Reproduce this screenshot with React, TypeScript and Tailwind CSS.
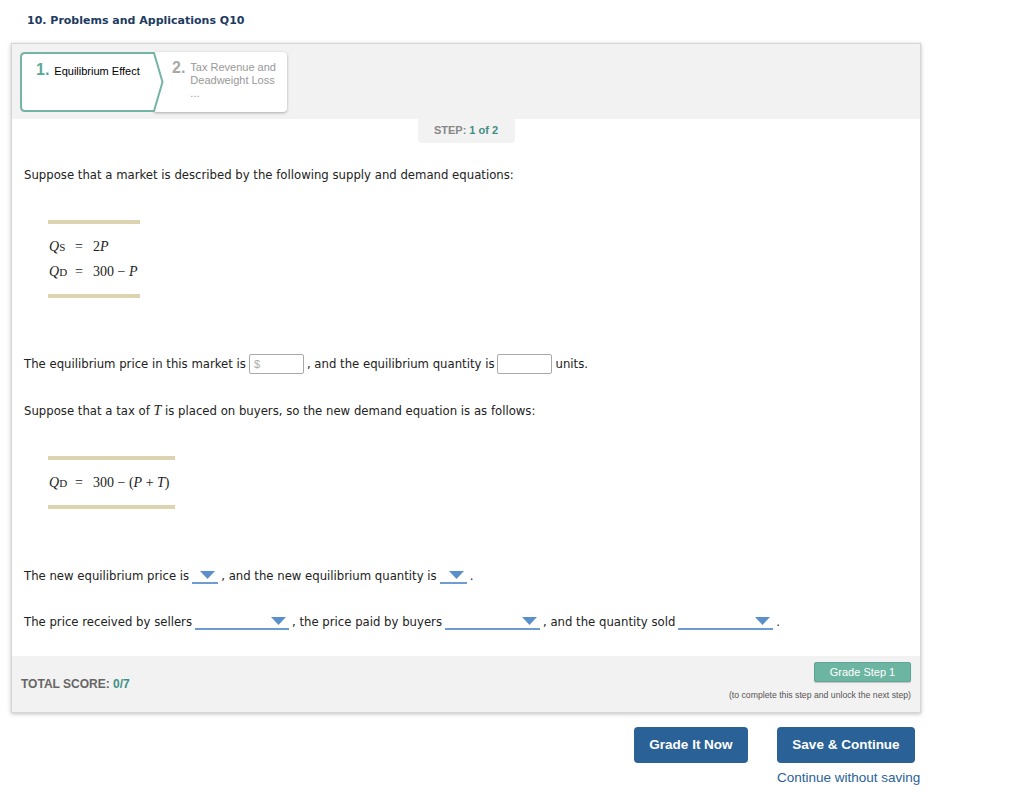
import React from 'react'

const TEAL = '#3f8f85'

function Dropdown({ w }: { w: number }) {
  return (
    <span
      className="inline-flex items-center justify-end border-b-2 border-[#6d9ccf] h-[16px] align-middle mx-[3px] pr-[3px]"
      style={{ width: w }}
    >
      <svg width="15" height="8" viewBox="0 0 15 8">
        <polygon points="0,0 15,0 7.5,8" fill="#5b8fcb" />
      </svg>
    </span>
  )
}

function TextBox({ prefix }: { prefix?: string }) {
  return (
    <span className="inline-flex items-center w-[55px] h-[20px] border border-[#a9a9a9] rounded-[2px] align-middle mx-[3px] px-[4px] bg-white">
      {prefix && <span className="text-[#aaa] text-[11px] font-['Liberation_Sans']">{prefix}</span>}
    </span>
  )
}

function Q({ sub }: { sub: string }) {
  return (
    <span>
      <i>Q</i>
      <span className="text-[11px]">{sub}</span>
    </span>
  )
}

function EqBox({ width, children }: { width: number; children: React.ReactNode }) {
  return (
    <div className="ml-[24px]" style={{ width }}>
      <div className="h-[4px] bg-[#dcd4b1]" />
      <div className="py-[10px] font-['Liberation_Serif'] text-[14px] text-[#222] pl-[1px]">{children}</div>
      <div className="h-[4px] bg-[#dcd4b1]" />
    </div>
  )
}

export default function App() {
  return (
    <div className="w-[1024px] h-[798px] bg-white font-['DejaVu_Sans'] text-[#222] overflow-hidden">
      <h1 className="pt-[14px] pl-[27px] text-[11px] font-bold text-[#1d3a5f] leading-[14px]">
        10. Problems and Applications Q10
      </h1>

      <div className="ml-[11px] mt-[15px] w-[910px] border border-[#d6d6d6] shadow-[0_1px_4px_rgba(0,0,0,0.25)]">
        {/* step tabs */}
        <div className="bg-[#f2f2f2] h-[75px] pt-[8px] pl-[8px]">
          <div className="flex h-[60px]">
            <div className="relative z-10 w-[144px] h-[60px]">
              <svg className="absolute inset-0" width="144" height="60" viewBox="0 0 144 60">
                <path
                  d="M5 1 H134 L142.5 30 L134 59 H5 Q1 59 1 55 V5 Q1 1 5 1 Z"
                  fill="#fff"
                  stroke="#74b4a5"
                  strokeWidth="2"
                />
              </svg>
              <div className="relative flex items-baseline pl-[16px] pt-[6px] font-['Liberation_Sans']">
                <span className="text-[16px] font-bold text-[#5aa897] mr-[5px]">1.</span>
                <span className="text-[11px] text-black">Equilibrium Effect</span>
              </div>
            </div>
            <div className="-ml-[10px] w-[133px] h-[60px] bg-white rounded-r-[4px] shadow-[0_1px_3px_rgba(0,0,0,0.3)] flex pl-[18px] pt-[7px] font-['Liberation_Sans']">
              <span className="text-[16px] font-bold text-[#a8a8a8] mr-[5px] leading-[18px]">2.</span>
              <span className="text-[11px] text-[#999] leading-[13px] pt-[2px]">
                Tax Revenue and
                <br />
                Deadweight Loss
                <br />
                ...
              </span>
            </div>
          </div>
        </div>

        {/* content */}
        <div className="bg-white">
          <div className="flex justify-center">
            <div className="w-[97px] h-[24px] pb-[2px] bg-[#f2f2f2] rounded-b-[4px] flex items-center justify-center font-['Liberation_Sans'] text-[11px] font-bold">
              <span className="text-[#888]">STEP:</span>
              <span className="ml-[3px]" style={{ color: TEAL }}>1 of 2</span>
            </div>
          </div>

          <div className="pl-[12px] text-[11.7px] leading-[14px]">
            <p className="mt-[25px]">Suppose that a market is described by the following supply and demand equations:</p>

            <div className="mt-[38px]">
              <EqBox width={92}>
                <div className="flex h-[25px] items-center">
                  <span className="w-[26px]"><Q sub="S" /></span>
                  <span className="w-[18px]">=</span>
                  <span>2<i>P</i></span>
                </div>
                <div className="flex h-[25px] items-center">
                  <span className="w-[26px]"><Q sub="D" /></span>
                  <span className="w-[18px]">=</span>
                  <span>300 − <i>P</i></span>
                </div>
              </EqBox>
            </div>

            <p className="mt-[55px] flex items-center h-[22px]">
              The equilibrium price in this market is
              <TextBox prefix="$" />
              , and the equilibrium quantity is
              <TextBox />
              units.
            </p>

            <p className="mt-[29px]">
              Suppose that a tax of <i className="font-['Liberation_Serif'] text-[14px]">T</i> is placed on buyers, so the new demand equation is as follows:
            </p>

            <div className="mt-[38px]">
              <EqBox width={127}>
                <div className="flex h-[25px] items-center">
                  <span className="w-[26px]"><Q sub="D" /></span>
                  <span className="w-[18px]">=</span>
                  <span>300 − (<i>P</i> + <i>T</i>)</span>
                </div>
              </EqBox>
            </div>

            <p className="mt-[57px] flex items-center h-[20px]">
              The new equilibrium price is
              <Dropdown w={26} />
              , and the new equilibrium quantity is
              <Dropdown w={27} />
              .
            </p>

            <p className="mt-[26px] flex items-center h-[20px]">
              The price received by sellers
              <Dropdown w={94} />
              , the price paid by buyers
              <Dropdown w={95} />
              , and the quantity sold
              <Dropdown w={95} />
              .
            </p>
          </div>

          <div className="h-[24px]" />
        </div>

        {/* footer */}
        <div className="bg-[#f2f2f2] h-[56px] flex justify-between items-start px-[9px] font-['Liberation_Sans']">
          <div className="mt-[19px] text-[12px] font-bold text-[#666]">
            TOTAL SCORE: <span style={{ color: TEAL }}>0/7</span>
          </div>
          <div className="flex flex-col items-end mt-[6px]">
            <button className="w-[97px] h-[20px] bg-[#6db5a3] border border-[#5fa593] rounded-[2px] text-white text-[11px] shadow-[0_1px_1px_rgba(0,0,0,0.2)]">
              Grade Step 1
            </button>
            <span className="mt-[7px] text-[8.7px] text-[#555]">(to complete this step and unlock the next step)</span>
          </div>
        </div>
      </div>

      {/* bottom actions */}
      <div className="flex mt-[14px] pl-[634px] font-['Liberation_Sans']">
        <button className="w-[114px] h-[36px] bg-[#2a6297] rounded-[4px] text-white text-[13.5px] font-bold">
          Grade It Now
        </button>
        <div className="ml-[29px] flex flex-col items-start">
          <button className="w-[138px] h-[36px] bg-[#2a6297] rounded-[4px] text-white text-[13.5px] font-bold">
            Save &amp; Continue
          </button>
          <span className="mt-[5px] text-[13.5px] text-[#2a6297] whitespace-nowrap">Continue without saving</span>
        </div>
      </div>
    </div>
  )
}
